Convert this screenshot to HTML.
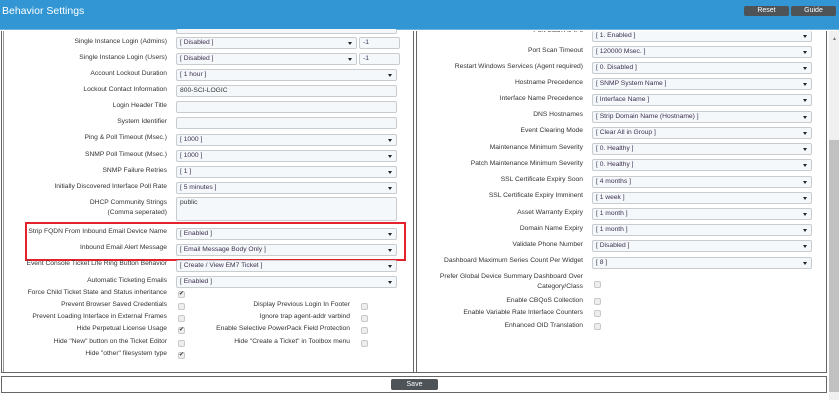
<!DOCTYPE html>
<html><head><meta charset="utf-8"><style>
*{box-sizing:border-box;margin:0;padding:0}
body{width:839px;height:400px;overflow:hidden;background:#fff;font-family:"Liberation Sans",sans-serif;font-size:6.7px;color:#333;position:relative}
.hdr{position:absolute;left:0;top:0;width:839px;height:30px;background:#3196d3;border-bottom:1px solid #6bb3e0}
.hdr .t{position:absolute;left:2px;top:5px;color:#fff;font-size:10.5px}
.btn{position:absolute;top:6px;height:10px;background:#4d5357;color:#fff;font-size:7px;text-align:center;line-height:10px;border-radius:2px}
.a{position:absolute}
.l{position:absolute;text-align:right;white-space:nowrap;line-height:10px}
.s{position:absolute;height:12px;border:1px solid #c8ccce;background:#f5f8fa;border-radius:2px;color:#3a3050;padding-left:3px;line-height:10px;white-space:nowrap}
.s.d::after{content:"";position:absolute;right:4px;top:4px;border-left:2.5px solid transparent;border-right:2.5px solid transparent;border-top:3px solid #222}
.c{position:absolute;width:7px;height:7px;border:1px solid #c8c8c8;background:#eee;border-radius:2px}
.c.k::after{content:"✔";position:absolute;left:0;top:-2px;font-size:6px;color:#333}
.vl{position:absolute;background:#666}
</style></head><body>
<div class="hdr"><div class="t">Behavior Settings</div>
<div class="btn" style="left:744px;width:45px">Reset</div>
<div class="btn" style="left:791px;width:45px">Guide</div></div>

<div class="vl" style="left:1px;top:31px;width:1px;height:342px"></div>
<div class="vl" style="left:3px;top:31px;width:1px;height:342px;background:#999"></div>
<div class="vl" style="left:413px;top:31px;width:1px;height:342px"></div>
<div class="vl" style="left:416px;top:31px;width:1px;height:342px"></div>
<div class="vl" style="left:826px;top:31px;width:1px;height:342px"></div>
<div class="vl" style="left:1px;top:372px;width:826px;height:1px"></div>
<div class="a" style="left:1px;top:376px;width:826px;height:17px;border:1px solid #666"></div>
<div class="btn" style="left:391px;top:379px;width:47px;height:11px;line-height:11px">Save</div>
<div class="a" style="left:829px;top:31px;width:10px;height:369px;background:#f0f0f0"></div>
<div class="a" style="left:829px;top:140px;width:10px;height:252px;background:#c1c1c1"></div>
<div class="a" style="left:832px;top:36px;font-size:5px;color:#777">▲</div>

<div class="s" style="left:176px;top:29px;width:221px;height:5px;border-top:none"></div>

<div class="l" style="right:672px;top:37px">Single Instance Login (Admins)</div>
<div class="s d" style="left:176px;top:37px;width:181px">[ Disabled ]</div>
<div class="s" style="left:359px;top:37px;width:41px">-1</div>
<div class="l" style="right:672px;top:53px">Single Instance Login (Users)</div>
<div class="s d" style="left:176px;top:53px;width:181px">[ Disabled ]</div>
<div class="s" style="left:359px;top:53px;width:41px">-1</div>
<div class="l" style="right:672px;top:69px">Account Lockout Duration</div>
<div class="s d" style="left:176px;top:69px;width:221px">[ 1 hour ]</div>
<div class="l" style="right:672px;top:85px">Lockout Contact Information</div>
<div class="s" style="left:176px;top:85px;width:221px;color:#333">800-SCI-LOGIC</div>
<div class="l" style="right:672px;top:101px">Login Header Title</div>
<div class="s" style="left:176px;top:101px;width:221px"></div>
<div class="l" style="right:672px;top:117px">System Identifier</div>
<div class="s" style="left:176px;top:117px;width:221px"></div>
<div class="l" style="right:672px;top:133px">Ping &amp; Poll Timeout (Msec.)</div>
<div class="s d" style="left:176px;top:134px;width:221px">[ 1000 ]</div>
<div class="l" style="right:672px;top:150px">SNMP Poll Timeout (Msec.)</div>
<div class="s d" style="left:176px;top:150px;width:221px">[ 1000 ]</div>
<div class="l" style="right:672px;top:166px">SNMP Failure Retries</div>
<div class="s d" style="left:176px;top:166px;width:221px">[ 1 ]</div>
<div class="l" style="right:672px;top:182px">Initially Discovered Interface Poll Rate</div>
<div class="s d" style="left:176px;top:182px;width:221px">[ 5 minutes ]</div>
<div class="l" style="right:672px;top:198px">DHCP Community Strings<br>(Comma seperated)</div>
<div class="s" style="left:176px;top:197px;width:221px;height:24px;color:#333">public</div>
<div class="a" style="left:25px;top:222px;width:381px;height:39px;border:2px solid #e3222b"></div>
<div class="l" style="right:672px;top:227px">Strip FQDN From Inbound Email Device Name</div>
<div class="s d" style="left:176px;top:228px;width:221px">[ Enabled ]</div>
<div class="l" style="right:672px;top:243px">Inbound Email Alert Message</div>
<div class="s d" style="left:176px;top:244px;width:221px">[ Email Message Body Only ]</div>
<div class="l" style="right:672px;top:259px">Event Console Ticket Life Ring Button Behavior</div>
<div class="s d" style="left:176px;top:260px;width:221px">[ Create / View EM7 Ticket ]</div>
<div class="l" style="right:672px;top:276px">Automatic Ticketing Emails</div>
<div class="s d" style="left:176px;top:276px;width:221px">[ Enabled ]</div>
<div class="l" style="right:672px;top:288px">Force Child Ticket State and Status inheritance</div>
<div class="c k" style="left:178px;top:291px"></div>
<div class="l" style="right:672px;top:300px">Prevent Browser Saved Credentials</div>
<div class="c" style="left:178px;top:303px"></div>
<div class="l" style="right:672px;top:312px">Prevent Loading Interface in External Frames</div>
<div class="c" style="left:178px;top:315px"></div>
<div class="l" style="right:672px;top:324px">Hide Perpetual License Usage</div>
<div class="c k" style="left:178px;top:327px"></div>
<div class="l" style="right:672px;top:337px">Hide "New" button on the Ticket Editor</div>
<div class="c" style="left:178px;top:340px"></div>
<div class="l" style="right:672px;top:349px">Hide "other" filesystem type</div>
<div class="c k" style="left:178px;top:352px"></div>

<div class="l" style="right:489px;top:300px">Display Previous Login In Footer</div>
<div class="c" style="left:361px;top:303px"></div>
<div class="l" style="right:489px;top:312px">Ignore trap agent-addr varbind</div>
<div class="c" style="left:361px;top:315px"></div>
<div class="l" style="right:489px;top:324px">Enable Selective PowerPack Field Protection</div>
<div class="c" style="left:361px;top:327px"></div>
<div class="l" style="right:489px;top:337px">Hide "Create a Ticket" in Toolbox menu</div>
<div class="c" style="left:361px;top:340px"></div>

<div class="l" style="right:256px;top:31px;height:4px;overflow:hidden"><span style="position:relative;top:-5px">Port Scan All IPs</span></div>
<div class="s d" style="left:592px;top:31px;width:220px;height:11px;border-top:none">[ 1. Enabled ]</div>
<div class="l" style="right:256px;top:46px">Port Scan Timeout</div>
<div class="s d" style="left:592px;top:46px;width:220px">[ 120000 Msec. ]</div>
<div class="l" style="right:256px;top:62px">Restart Windows Services (Agent required)</div>
<div class="s d" style="left:592px;top:62px;width:220px">[ 0. Disabled ]</div>
<div class="l" style="right:256px;top:78px">Hostname Precedence</div>
<div class="s d" style="left:592px;top:78px;width:220px">[ SNMP System Name ]</div>
<div class="l" style="right:256px;top:94px">Interface Name Precedence</div>
<div class="s d" style="left:592px;top:94px;width:220px">[ Interface Name ]</div>
<div class="l" style="right:256px;top:110px">DNS Hostnames</div>
<div class="s d" style="left:592px;top:111px;width:220px">[ Strip Domain Name (Hostname) ]</div>
<div class="l" style="right:256px;top:126px">Event Clearing Mode</div>
<div class="s d" style="left:592px;top:127px;width:220px">[ Clear All in Group ]</div>
<div class="l" style="right:256px;top:143px">Maintenance Minimum Severity</div>
<div class="s d" style="left:592px;top:143px;width:220px">[ 0. Healthy ]</div>
<div class="l" style="right:256px;top:159px">Patch Maintenance Minimum Severity</div>
<div class="s d" style="left:592px;top:159px;width:220px">[ 0. Healthy ]</div>
<div class="l" style="right:256px;top:175px">SSL Certificate Expiry Soon</div>
<div class="s d" style="left:592px;top:176px;width:220px">[ 4 months ]</div>
<div class="l" style="right:256px;top:191px">SSL Certificate Expiry Imminent</div>
<div class="s d" style="left:592px;top:192px;width:220px">[ 1 week ]</div>
<div class="l" style="right:256px;top:208px">Asset Warranty Expiry</div>
<div class="s d" style="left:592px;top:208px;width:220px">[ 1 month ]</div>
<div class="l" style="right:256px;top:224px">Domain Name Expiry</div>
<div class="s d" style="left:592px;top:224px;width:220px">[ 1 month ]</div>
<div class="l" style="right:256px;top:240px">Validate Phone Number</div>
<div class="s d" style="left:592px;top:240px;width:220px">[ Disabled ]</div>
<div class="l" style="right:256px;top:256px">Dashboard Maximum Series Count Per Widget</div>
<div class="s d" style="left:592px;top:257px;width:220px">[ 8 ]</div>
<div class="l" style="right:256px;top:272px">Prefer Global Device Summary Dashboard Over<br>Category/Class</div>
<div class="c" style="left:594px;top:281px"></div>
<div class="l" style="right:256px;top:296px">Enable CBQoS Collection</div>
<div class="c" style="left:594px;top:298px"></div>
<div class="l" style="right:256px;top:308px">Enable Variable Rate Interface Counters</div>
<div class="c" style="left:594px;top:310px"></div>
<div class="l" style="right:256px;top:321px">Enhanced OID Translation</div>
<div class="c" style="left:594px;top:323px"></div>
</body></html>
